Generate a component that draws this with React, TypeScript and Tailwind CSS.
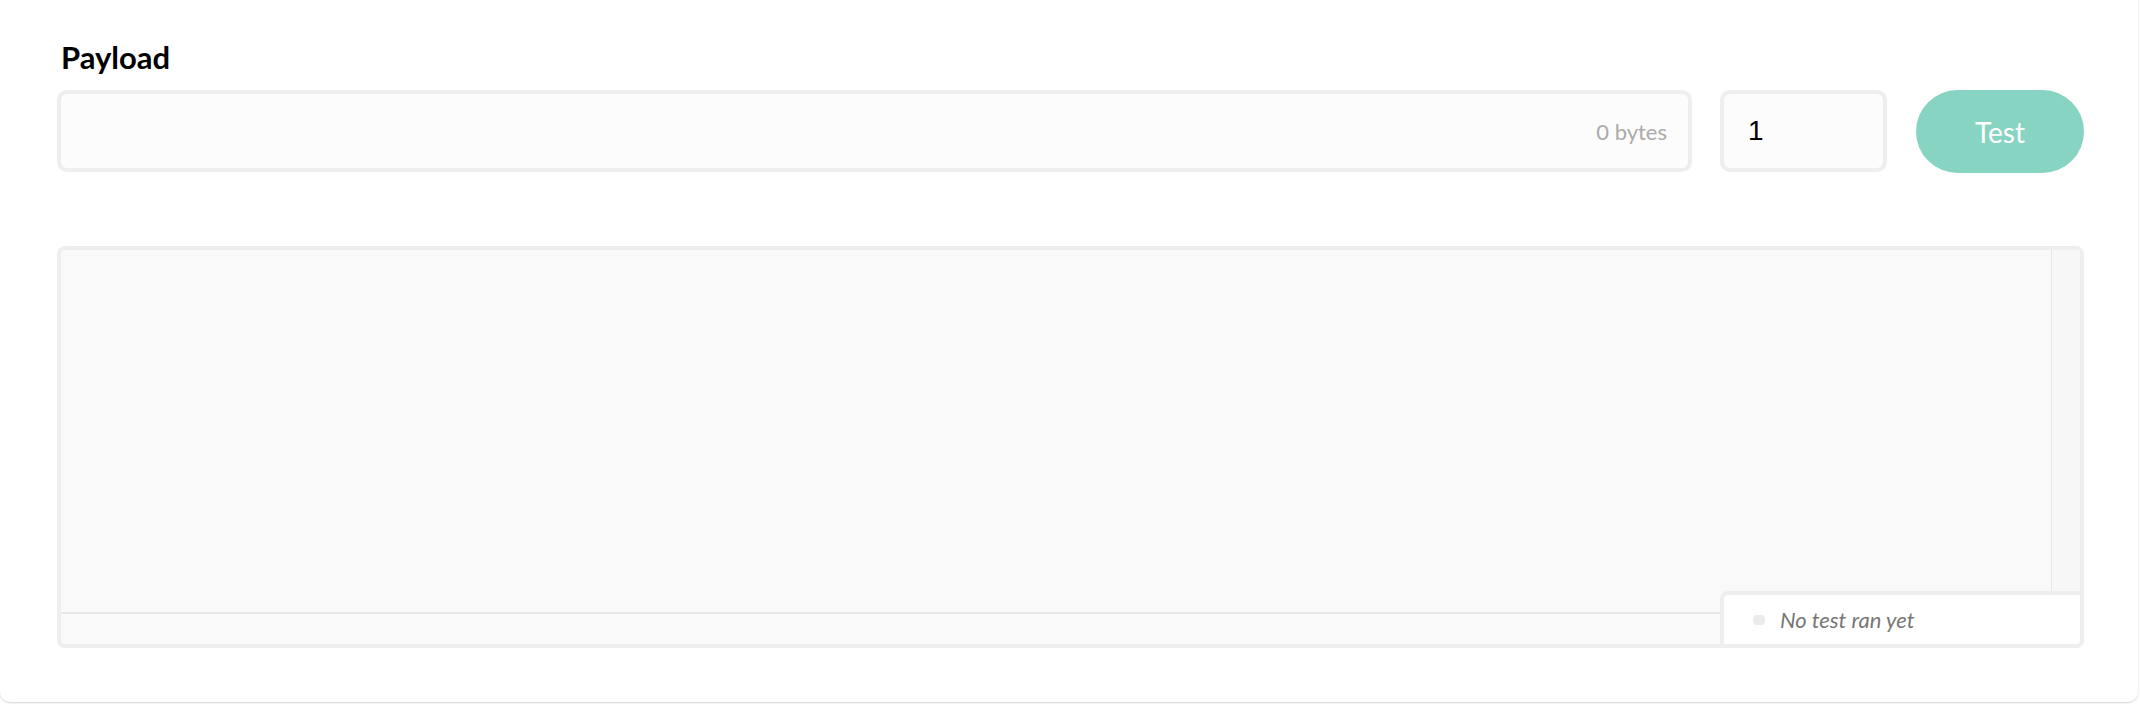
import React from "react";

export default function App() {
  return (
    <div className="w-[2140px] h-[704px] bg-white overflow-hidden" style={{ fontFamily: "Lato, 'Open Sans', sans-serif" }}>
      <div className="mt-[-10px] w-[2138px] h-[712px] rounded-[10px] bg-white shadow-[0_1px_2px_rgba(0,0,0,0.18)] pt-[52px] pl-[57px] pr-[54px]">
        <div className="pl-[4px] text-[31px] leading-[30px] font-bold text-black">Payload</div>
        <div className="mt-[18px] flex items-stretch">
          <div className="flex-1 h-[82px] rounded-[10px] border-4 border-[#eeeeee] bg-[#fcfcfc] flex items-center justify-end pr-[21px]">
            <span className="text-[22px] text-[#aaaaaa]">0 bytes</span>
          </div>
          <div className="ml-[28px] w-[167px] h-[82px] rounded-[10px] border-4 border-[#eeeeee] bg-[#fcfcfc] flex items-center pl-[24px]">
            <span className="text-[28px] text-black" style={{ fontFamily: "'Liberation Sans', Arial, sans-serif" }}>1</span>
          </div>
          <div className="ml-[29px] w-[168px] h-[83px] rounded-full bg-[#88d4c2] flex items-center justify-center">
            <span className="text-[28px] text-white">Test</span>
          </div>
        </div>
        <div className="relative mt-[73px] h-[402px] rounded-[8px] border-4 border-[#eeeeee] bg-[#f9f9f9] flex flex-col">
          <div className="flex flex-1">
            <div className="flex-1" />
            <div className="w-[29px] border-l border-[#e6e6e6] bg-[#f7f7f7]" />
          </div>
          <div className="h-[32px] border-t-2 border-[#e8e8e8]" />
          <div className="absolute right-[-4px] bottom-[-4px] w-[364px] h-[57px] rounded-tl-[8px] rounded-br-[8px] border-4 border-[#eeeeee] bg-white flex items-center pl-[29px]">
            <div className="w-[12px] h-[10px] rounded-[4px] bg-[#ebebeb]" />
            <span className="ml-[15px] text-[22px] italic text-[#777777]">No test ran yet</span>
          </div>
        </div>
      </div>
    </div>
  );
}
